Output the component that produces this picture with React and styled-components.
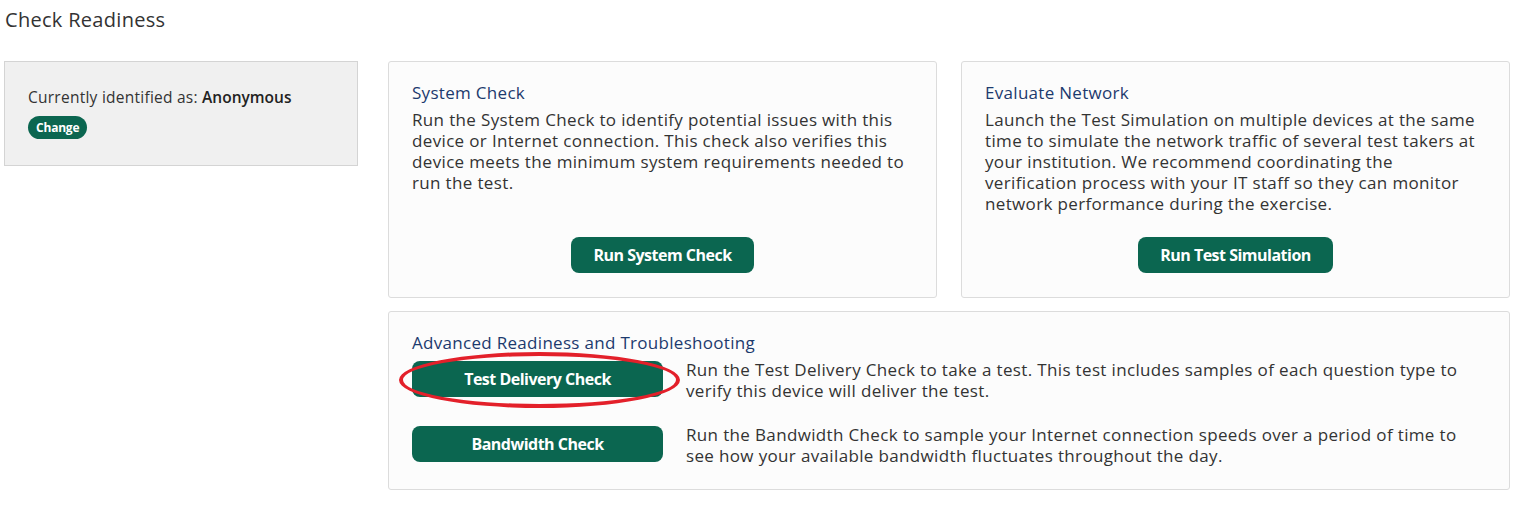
import React from 'react'
import styled, { createGlobalStyle } from 'styled-components'

const GlobalStyle = createGlobalStyle`
  body {
    margin: 0;
    background: #ffffff;
    font-family: 'Open Sans', 'Noto Sans', sans-serif;
    color: #333333;
  }
`

const Page = styled.div`
  padding: 7px 30px 0 4px;
`

const PageTitle = styled.h1`
  margin: 0 0 28px 1px;
  font-size: 20px;
  line-height: 26px;
  font-weight: 400;
  letter-spacing: 0.3px;
  color: #333333;
`

const Layout = styled.div`
  display: grid;
  grid-template-columns: 354px 1fr;
  gap: 30px;
  align-items: start;
`

const IdentityPanel = styled.div`
  background: #f0f0f0;
  border: 1px solid #d4d4d4;
  height: 105px;
  box-sizing: border-box;
  padding: 24px 23px;
`

const IdentityText = styled.p`
  margin: 0 0 7px;
  font-size: 15.5px;
  line-height: 22px;
  letter-spacing: 0.25px;
  color: #333333;

  strong {
    font-weight: 600;
    letter-spacing: 0;
    color: #222222;
  }
`

const Badge = styled.button`
  display: inline-flex;
  align-items: center;
  height: 23px;
  padding: 0 8px;
  border: none;
  border-radius: 12px;
  background: #0b6650;
  color: #ffffff;
  font-family: inherit;
  font-size: 12px;
  font-weight: 700;
  letter-spacing: -0.2px;
`

const CardGrid = styled.div`
  display: grid;
  grid-template-columns: 1fr 1fr;
  column-gap: 24px;
  row-gap: 13px;
`

const Card = styled.section`
  grid-column: ${(p) => (p.$wide ? '1 / -1' : 'auto')};
  display: flex;
  flex-direction: column;
  background: #fcfcfc;
  border: 1px solid #dcdcdc;
  border-radius: 3px;
  padding: 19px 23px ${(p) => (p.$wide ? '23px' : '24px')};
`

const CardTitle = styled.h2`
  margin: 0 0 4px;
  font-size: 17px;
  line-height: 24px;
  font-weight: 500;
  letter-spacing: 0.3px;
  color: #1c3a6e;
`

const Body = styled.p`
  margin: 0;
  font-size: 17px;
  line-height: 21px;
  letter-spacing: 0.35px;
  color: #333333;
`

const CardFooter = styled.div`
  margin-top: auto;
  padding-top: 23px;
  display: flex;
  justify-content: center;
`

const ActionButton = styled.button`
  height: 36px;
  min-width: ${(p) => p.$width || 'auto'};
  padding: 0 22px;
  border: none;
  border-radius: 8px;
  background: #0b6650;
  color: #ffffff;
  font-family: inherit;
  font-size: 16px;
  font-weight: 700;
  letter-spacing: -0.5px;
  cursor: pointer;
`

const ToolList = styled.div`
  display: flex;
  flex-direction: column;
  gap: 23px;
`

const ToolRow = styled.div`
  display: flex;
  align-items: flex-start;
  gap: 23px;
`

const Highlight = styled.div`
  position: relative;
  flex: 0 0 auto;
  display: flex;
  margin-top: 2px;
`

const Ellipse = styled.span`
  position: absolute;
  left: -13px;
  top: -9px;
  width: 281px;
  height: 56px;
  box-sizing: border-box;
  border: 4px solid #e3202a;
  border-radius: 50%;
  pointer-events: none;
`

const tools = [
  {
    label: 'Test Delivery Check',
    text: 'Run the Test Delivery Check to take a test. This test includes samples of each question type to verify this device will deliver the test.',
    marked: true,
  },
  {
    label: 'Bandwidth Check',
    text: 'Run the Bandwidth Check to sample your Internet connection speeds over a period of time to see how your available bandwidth fluctuates throughout the day.',
  },
]

const App = () => {
  return (
    <Page>
      <GlobalStyle />
      <PageTitle>Check Readiness</PageTitle>
      <Layout>
        <IdentityPanel>
          <IdentityText>
            Currently identified as: <strong>Anonymous</strong>
          </IdentityText>
          <Badge>Change</Badge>
        </IdentityPanel>

        <CardGrid>
          <Card>
            <CardTitle>System Check</CardTitle>
            <Body>
              Run the System Check to identify potential issues with this
              device or Internet connection. This check also verifies this
              device meets the minimum system requirements needed to run the
              test.
            </Body>
            <CardFooter>
              <ActionButton>Run System Check</ActionButton>
            </CardFooter>
          </Card>

          <Card>
            <CardTitle>Evaluate Network</CardTitle>
            <Body>
              Launch the Test Simulation on multiple devices at the same time
              to simulate the network traffic of several test takers at your
              institution. We recommend coordinating the verification process
              with your IT staff so they can monitor network performance
              during the exercise.
            </Body>
            <CardFooter>
              <ActionButton>Run Test Simulation</ActionButton>
            </CardFooter>
          </Card>

          <Card $wide>
            <CardTitle>Advanced Readiness and Troubleshooting</CardTitle>
            <ToolList>
              {tools.map((t) => (
                <ToolRow key={t.label}>
                  <Highlight>
                    <ActionButton $width='251px'>{t.label}</ActionButton>
                    {t.marked && <Ellipse />}
                  </Highlight>
                  <Body>{t.text}</Body>
                </ToolRow>
              ))}
            </ToolList>
          </Card>
        </CardGrid>
      </Layout>
    </Page>
  )
}

export default App
